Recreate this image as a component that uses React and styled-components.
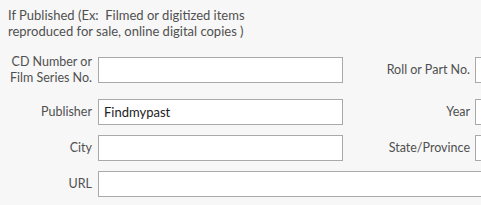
import styled, { createGlobalStyle } from "styled-components";

const GlobalStyle = createGlobalStyle`
  body {
    margin: 0;
    background: #f7f7f7;
    font-family: "Segoe UI", "Lato", "Open Sans", sans-serif;
    overflow: hidden;
  }
`;

const Panel = styled.div`
  width: 481px;
  height: 205px;
  padding: 7px 0 0 8px;
  box-sizing: border-box;
  overflow: hidden;
`;

const Intro = styled.div`
  font-size: 13px;
  line-height: 16px;
  color: #505050;
  margin-bottom: 12px;
`;

const Form = styled.div`
  display: grid;
  grid-template-columns: 84px 245px 120px 60px;
  grid-template-rows: 38px 26px 26px 26px;
  column-gap: 6px;
  row-gap: 10px;
  align-items: center;
`;

const Label = styled.label`
  font-size: 12.5px;
  line-height: 16px;
  color: #505050;
  text-align: right;
  white-space: nowrap;
  margin-right: ${(p) => (p.$inner ? "-1px" : "0")};
`;

const Field = styled.input`
  height: 26px;
  box-sizing: border-box;
  border: 1px solid #a9a9a9;
  background: #fff;
  font-family: inherit;
  font-size: 13px;
  color: #222;
  padding: 0 5px;
  margin: 0;
  outline: none;
  grid-column: ${(p) => p.$span || "auto"};
  width: ${(p) => (p.$span ? "400px" : "auto")};
`;

export default function App() {
  return (
    <>
      <GlobalStyle />
      <Panel>
        <Intro>
          If Published (Ex:&nbsp; Filmed or digitized items
          <br />
          reproduced for sale, online digital copies )
        </Intro>
        <Form>
          <Label>
            CD Number or
            <br />
            Film Series No.
          </Label>
          <Field />
          <Label $inner>Roll or Part No.</Label>
          <Field />
          <Label>Publisher</Label>
          <Field defaultValue="Findmypast" />
          <Label $inner>Year</Label>
          <Field />
          <Label>City</Label>
          <Field />
          <Label $inner>State/Province</Label>
          <Field />
          <Label>URL</Label>
          <Field $span="2 / 5" />
        </Form>
      </Panel>
    </>
  );
}
